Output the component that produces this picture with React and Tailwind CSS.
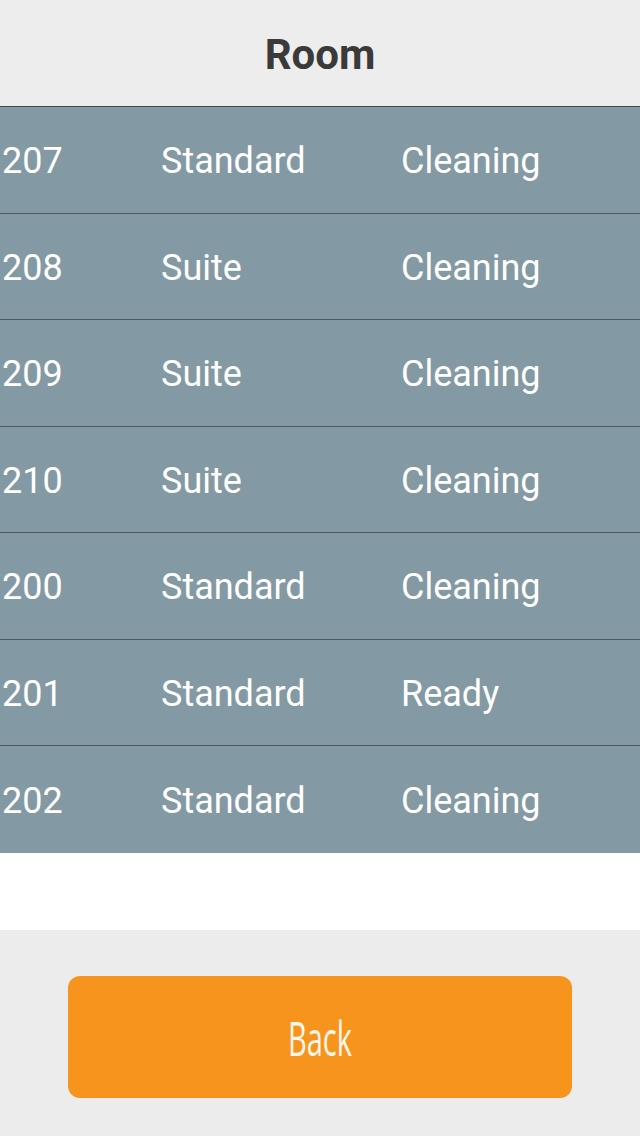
import React from "react";

const rooms = [
  { no: "207", type: "Standard", status: "Cleaning" },
  { no: "208", type: "Suite", status: "Cleaning" },
  { no: "209", type: "Suite", status: "Cleaning" },
  { no: "210", type: "Suite", status: "Cleaning" },
  { no: "200", type: "Standard", status: "Cleaning" },
  { no: "201", type: "Standard", status: "Ready" },
  { no: "202", type: "Standard", status: "Cleaning" },
];

const RoomRow = ({ room, last }) => (
  <div
    className={
      "grid grid-cols-[159px_240px_1fr] items-center h-[106.5px] pl-[2px] pt-[3px] bg-[#8399a3] text-white text-[36px] " +
      (last ? "" : "border-b border-[#4b5a62]")
    }
  >
    <span>{room.no}</span>
    <span>{room.type}</span>
    <span>{room.status}</span>
  </div>
);

const App = () => {
  return (
    <div
      className="flex flex-col w-[640px] h-[1136px] bg-white"
      style={{ fontFamily: "Roboto, 'Liberation Sans', sans-serif" }}
    >
      <header className="flex items-center justify-center h-[107px] pt-[3px] bg-[#ededed] border-b border-[#3f4a50]">
        <h1 className="text-[42px] font-bold text-[#3a3a3a] leading-none">Room</h1>
      </header>

      <div className="flex flex-col">
        {rooms.map((room, i) => (
          <RoomRow key={room.no} room={room} last={i === rooms.length - 1} />
        ))}
      </div>

      <div className="flex-1" />

      <footer className="flex justify-center h-[206px] pt-[46px] bg-[#ececec]">
        <button className="flex items-center justify-center w-[504px] h-[122px] rounded-[12px] bg-[#f7941e]">
          <span
            className="inline-block text-[29px] text-[#fff7ec] leading-none scale-y-[1.65]"
            style={{ fontFamily: "'Open Sans', 'DejaVu Sans Condensed', sans-serif" }}
          >
            Back
          </span>
        </button>
      </footer>
    </div>
  );
};

export default App;
